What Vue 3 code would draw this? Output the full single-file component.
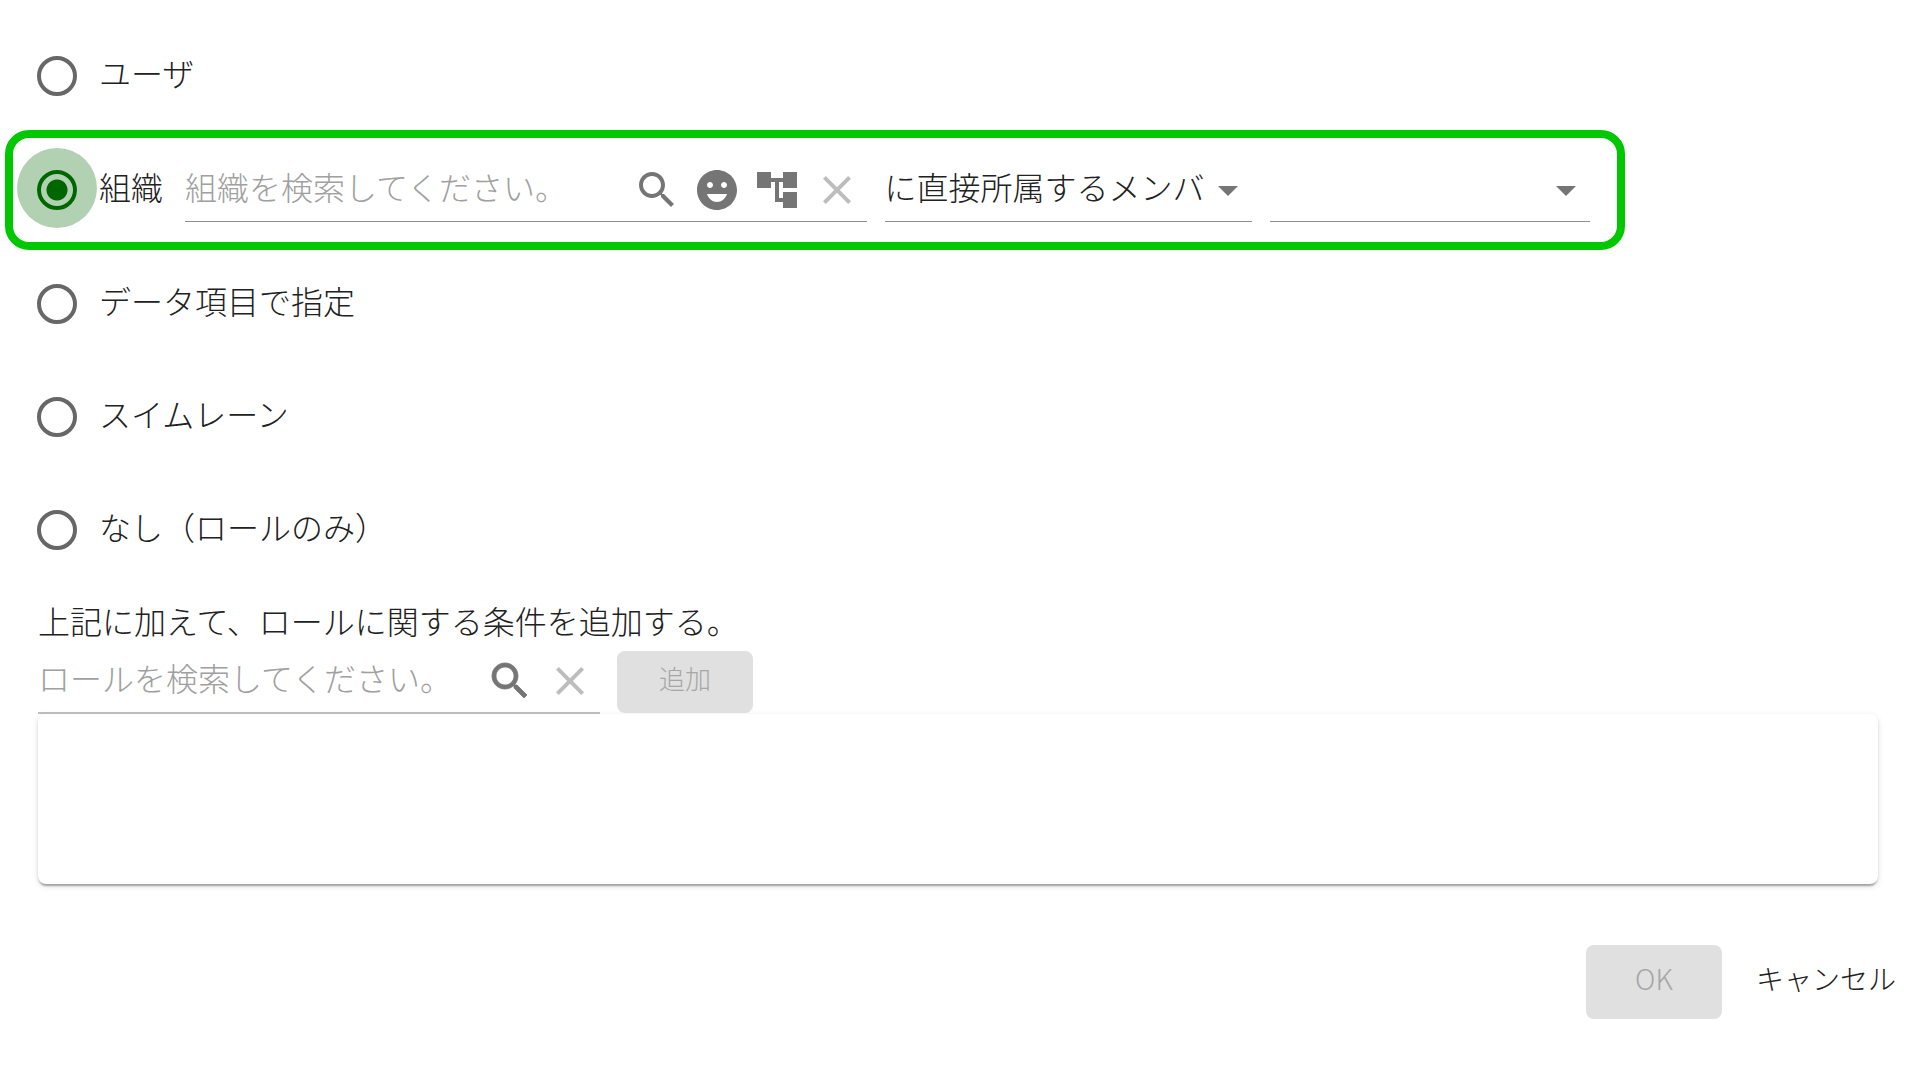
<template>
  <form class="dialog" @submit.prevent>
    <div class="options" role="radiogroup" aria-label="割り当て方法">
      <template v-for="item in options" :key="item.value">
        <div v-if="item.value === 'organization'" class="option-row selected-row">
          <label class="option">
            <input type="radio" name="target" v-model="target" :value="item.value" />
            <span>{{ item.label }}</span>
          </label>
          <div class="field organization-field">
            <input type="text" v-model="organization" placeholder="組織を検索してください。" aria-label="組織" />
            <button v-for="icon in organizationIcons" type="button" class="icon-button" :class="{ faded: icon.name === 'clear' }" :aria-label="icon.label">
              <svg viewBox="0 0 24 24"><path :d="icons[icon.name]" /></svg>
            </button>
          </div>
          <div class="field member-field">
            <select v-model="member" aria-label="所属条件">
              <option value="direct">に直接所属するメンバ</option>
            </select>
            <svg class="arrow" viewBox="0 0 24 24"><path d="M7 10l5 5 5-5z" /></svg>
          </div>
          <div class="field extra-field">
            <select v-model="extra" aria-label="追加条件">
              <option value=""></option>
            </select>
            <svg class="arrow" viewBox="0 0 24 24"><path d="M7 10l5 5 5-5z" /></svg>
          </div>
        </div>
        <div v-else class="option-row">
          <label class="option">
            <input type="radio" name="target" v-model="target" :value="item.value" />
            <span>{{ item.label }}</span>
          </label>
        </div>
      </template>
    </div>

    <section class="roles">
      <label class="roles-label" for="role">上記に加えて、ロールに関する条件を追加する。</label>
      <div class="roles-search">
        <div class="field role-field">
          <input id="role" type="text" v-model="role" placeholder="ロールを検索してください。" />
          <button type="button" class="icon-button bold" aria-label="検索">
            <svg viewBox="0 0 24 24"><path :d="icons.search" /></svg>
          </button>
          <button type="button" class="icon-button faded" aria-label="クリア">
            <svg viewBox="0 0 24 24"><path :d="icons.clear" /></svg>
          </button>
        </div>
        <button type="button" class="button add-button" disabled>追加</button>
      </div>
      <div class="roles-list"></div>
    </section>

    <footer class="actions">
      <button type="submit" class="button ok-button" disabled>OK</button>
      <button type="button" class="cancel-button">キャンセル</button>
    </footer>
  </form>
</template>

<script setup>
import { ref } from "vue";

const options = [
  { value: "user", label: "ユーザ" },
  { value: "organization", label: "組織" },
  { value: "data", label: "データ項目で指定" },
  { value: "swimlane", label: "スイムレーン" },
  { value: "none", label: "なし（ロールのみ）" },
];

const organizationIcons = [
  { name: "search", label: "検索" },
  { name: "face", label: "自分の組織" },
  { name: "tree", label: "組織ツリー" },
  { name: "clear", label: "クリア" },
];

const icons = {
  search:
    "M15.5 14h-.79l-.28-.27C15.41 12.59 16 11.11 16 9.5 16 5.91 13.09 3 9.5 3S3 5.91 3 9.5 5.91 16 9.5 16c1.61 0 3.09-.59 4.23-1.57l.27.28v.79l5 4.99L20.49 19l-4.99-5zm-6 0C7.01 14 5 11.99 5 9.5S7.01 5 9.5 5 14 7.01 14 9.5 11.99 14 9.5 14z",
  face: "M12 2C6.48 2 2 6.48 2 12s4.48 10 10 10 10-4.48 10-10S17.52 2 12 2zM8.5 8c.83 0 1.5.67 1.5 1.5S9.33 11 8.5 11 7 10.33 7 9.5 7.67 8 8.5 8zM12 18c-2.28 0-4.22-1.66-5-4h10c-.78 2.34-2.72 4-5 4zm3.5-7c-.83 0-1.5-.67-1.5-1.5S14.67 8 15.5 8s1.5.67 1.5 1.5-.67 1.5-1.5 1.5z",
  tree: "M22 11V3h-7v3H9V3H2v8h7V8h2v10h4v3h7v-8h-7v3h-2V8h2v3z",
  clear: "M19 6.41L17.59 5 12 10.59 6.41 5 5 6.41 10.59 12 5 17.59 6.41 19 12 13.41 17.59 19 19 17.59 13.41 12z",
};

const target = ref("organization");
const organization = ref("");
const member = ref("direct");
const extra = ref("");
const role = ref("");
</script>

<style>
body {
  margin: 0;
  background-color: #fff;
}
</style>

<style scoped>
.dialog {
  padding: 36px 0 60px;
  font-family: "Noto Sans CJK JP", sans-serif;
  font-size: 32px;
  font-weight: 300;
  line-height: 48px;
  color: #212121;
}

input,
select,
button {
  margin: 0;
  padding: 0;
  border: none;
  outline: none;
  background: transparent;
  font: inherit;
  color: inherit;
  appearance: none;
}

.options {
  display: flex;
  flex-direction: column;
}

.option-row {
  display: flex;
  align-items: center;
  height: 80px;
  padding-left: 37px;
}

.option-row + .option-row {
  margin-top: 33px;
}

.option-row.selected-row {
  gap: 18px;
  margin: 14px 295px 14px 5px;
  padding: 12px 27px 12px 24px;
  border: 8px solid #00c800;
  border-radius: 24px;
}

.selected-row + .option-row {
  margin-top: 0;
}

.option {
  display: flex;
  align-items: center;
  gap: 22px;
  white-space: nowrap;
}

.option span {
  padding-bottom: 8px;
}

.selected-row .option {
  padding-right: 4px;
}

.option input {
  flex: none;
  width: 40px;
  height: 40px;
  border: 4px solid #676767;
  border-radius: 50%;
}

.option input:checked {
  border-color: #006700;
  background: radial-gradient(circle, #006700 10px, #b2d1b3 11px);
  box-shadow: 0 -2px 0 20px #b2d1b3;
}

.field {
  position: relative;
  display: flex;
  align-items: center;
  gap: 12px;
  box-sizing: border-box;
  height: 64px;
  border-bottom: 1px solid #8f8f8f;
}

.field input,
.field select {
  flex: 1;
  min-width: 0;
  height: 62px;
  padding-bottom: 8px;
}

.field input::placeholder {
  color: #a0a0a0;
  opacity: 1;
}

.organization-field {
  flex: 676 1 0;
  padding-right: 6px;
}

.member-field {
  flex: 368 1 0;
}

.extra-field {
  flex: 320 1 0;
}

.arrow {
  position: absolute;
  right: 0;
  width: 48px;
  height: 48px;
  fill: #757575;
  pointer-events: none;
}

.icon-button {
  flex: none;
  width: 48px;
  height: 48px;
}

.icon-button svg {
  display: block;
  fill: #757575;
}

.icon-button.faded svg {
  fill: #bdbdbd;
}

.icon-button.bold svg {
  stroke: #757575;
  stroke-width: 0.4;
}

.roles {
  margin: 26px 42px 0 38px;
}

.roles-label {
  display: block;
}

.roles-search {
  display: flex;
  align-items: center;
  gap: 17px;
  margin-top: 6px;
}

.role-field {
  width: 562px;
  padding-right: 6px;
  border-bottom: 2px solid #bdbdbd;
}

.roles-list {
  height: 170px;
  border-radius: 8px;
  box-shadow: 0 4px 2px -2px rgba(0, 0, 0, 0.2), 0 2px 2px rgba(0, 0, 0, 0.14), 0 2px 6px rgba(0, 0, 0, 0.12);
}

.button {
  width: 136px;
  padding-bottom: 8px;
  border-radius: 8px;
  background-color: #e0e0e0;
  color: #a6a6a6;
}

.add-button {
  height: 62px;
  font-size: 26px;
}

.actions {
  display: flex;
  justify-content: flex-end;
  gap: 34px;
  margin-top: 61px;
  padding-right: 24px;
  font-size: 28px;
}

.ok-button {
  height: 74px;
}

.cancel-button {
  padding-bottom: 8px;
}
</style>
